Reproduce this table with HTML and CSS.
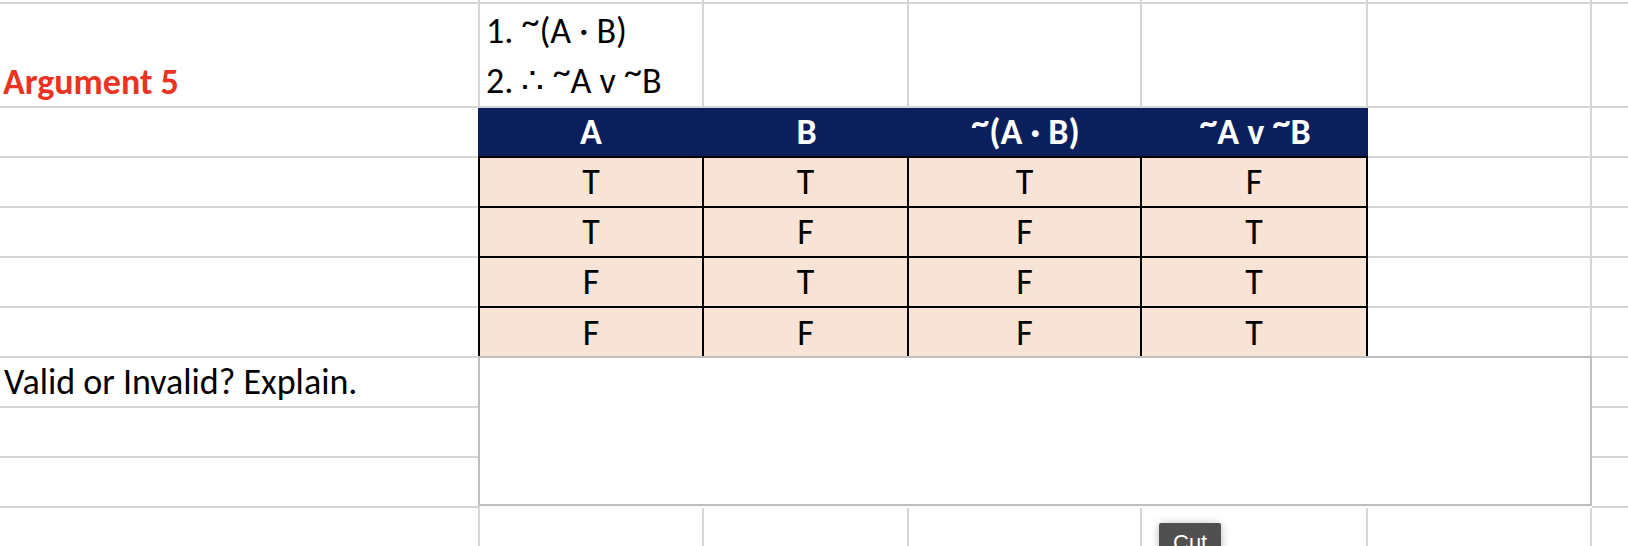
FILE: index.html
```html
<!DOCTYPE html>
<html lang="en">
<head>
<meta charset="utf-8">
<title>Argument 5</title>
<link rel="stylesheet" href="styles.css">
</head>
<body>
<div class="sheet">
  <!-- row 1 (sliver) -->
  <div class="c"></div><div class="c"></div><div class="c"></div><div class="c"></div><div class="c"></div><div class="c"></div><div class="c edge"></div>

  <!-- row 2 -->
  <div class="c label title">Argument 5</div>
  <div class="c premises"><span>1. <span class="tl">~</span>(A · B)</span><span>2. ∴ <span class="tl">~</span>A v <span class="tl">~</span>B</span></div>
  <div class="c"></div><div class="c"></div><div class="c"></div><div class="c"></div><div class="c edge"></div>

  <!-- truth table -->
  <div class="truth">
    <div class="th"><span>A</span></div><div class="th"><span>B</span></div><div class="th"><span><span class="tl">~</span>(A · B)</span></div><div class="th"><span><span class="tl">~</span>A v <span class="tl">~</span>B</span></div>
    <div class="td first">T</div><div class="td">T</div><div class="td">T</div><div class="td">F</div>
    <div class="td first">T</div><div class="td">F</div><div class="td">F</div><div class="td">T</div>
    <div class="td first">F</div><div class="td">T</div><div class="td">F</div><div class="td">T</div>
    <div class="td first lastrow">F</div><div class="td lastrow">F</div><div class="td lastrow">F</div><div class="td lastrow">T</div>
  </div>

  <!-- answer box -->
  <div class="answer"></div>

  <!-- rows 3-7: cells around the table -->
  <div class="c"></div><div class="c"></div><div class="c edge"></div>
  <div class="c"></div><div class="c"></div><div class="c edge"></div>
  <div class="c"></div><div class="c"></div><div class="c edge"></div>
  <div class="c"></div><div class="c"></div><div class="c edge"></div>
  <div class="c"></div><div class="c"></div><div class="c edge"></div>

  <!-- rows 8-10 -->
  <div class="c label">Valid or Invalid? Explain.</div><div class="c edge"></div>
  <div class="c"></div><div class="c edge"></div>
  <div class="c"></div><div class="c edge"></div>

  <!-- row 11 -->
  <div class="c end"></div><div class="c end"></div><div class="c end"></div><div class="c end"></div><div class="c end"></div><div class="c end"></div><div class="c end edge"></div>

  <div class="tip">Cut</div>
</div>
</body>
</html>
```

FILE: styles.css
```css
html, body {
  margin: 0;
  padding: 0;
  background: #ffffff;
}

.sheet {
  position: relative;
  width: 1628px;
  height: 546px;
  overflow: hidden;
  display: grid;
  grid-template-columns: 480px 224px 205px 233px 226px 224px 36px;
  grid-template-rows: 4px 104px repeat(8, 50px) 38px;
  font-family: Carlito, Calibri, "Open Sans", sans-serif;
  font-size: 36px;
  color: #000000;
}

.c {
  box-sizing: border-box;
  border-right: 2px solid #d6d6d6;
  border-bottom: 2px solid #d6d6d6;
  min-width: 0;
}

.c.edge {
  border-right: none;
}

.c.end {
  border-bottom: none;
}

.label {
  display: flex;
  align-items: flex-end;
  padding-left: 4px;
  line-height: 48px;
  white-space: nowrap;
}

.title {
  color: #ea3323;
  font-weight: 700;
  padding-left: 3px;
}

.premises {
  display: flex;
  flex-direction: column;
  justify-content: flex-end;
  padding-left: 6px;
  line-height: 50px;
  white-space: nowrap;
}

.tl {
  display: inline-block;
  line-height: 0;
  vertical-align: 0.24em;
}

.truth {
  grid-column: 2 / 6;
  grid-row: 3 / 8;
  z-index: 1;
  margin-left: -2px;
  display: grid;
  grid-template-columns: 226px 205px 233px 226px;
  grid-template-rows: repeat(5, 50px);
}

.th, .td {
  box-sizing: border-box;
  display: flex;
  align-items: center;
  justify-content: center;
  line-height: 48px;
  white-space: nowrap;
}

.th {
  background: #0b1f5c;
  color: #ffffff;
  font-weight: 700;
  border-bottom: 2px solid #000000;
}

.td {
  background: #f8e4d7;
  border-right: 2px solid #000000;
  border-bottom: 2px solid #000000;
}

.td.first {
  border-left: 2px solid #000000;
}

.td.lastrow {
  border-bottom: none;
}

.answer {
  grid-column: 2 / 7;
  grid-row: 8 / 11;
  z-index: 2;
  align-self: start;
  box-sizing: border-box;
  height: 150px;
  margin-top: -2px;
  margin-left: -2px;
  background: #ffffff;
  border: 2px solid #bfbfbf;
}

.tip {
  position: absolute;
  left: 1159px;
  top: 523px;
  z-index: 3;
  padding: 7px 14px 10px;
  background: #505050;
  color: #ffffff;
  font-family: "Liberation Sans", Arial, sans-serif;
  font-size: 22px;
  line-height: 26px;
  border-radius: 2px;
  box-shadow: 0 1px 8px rgba(0, 0, 0, 0.28);
}
```
